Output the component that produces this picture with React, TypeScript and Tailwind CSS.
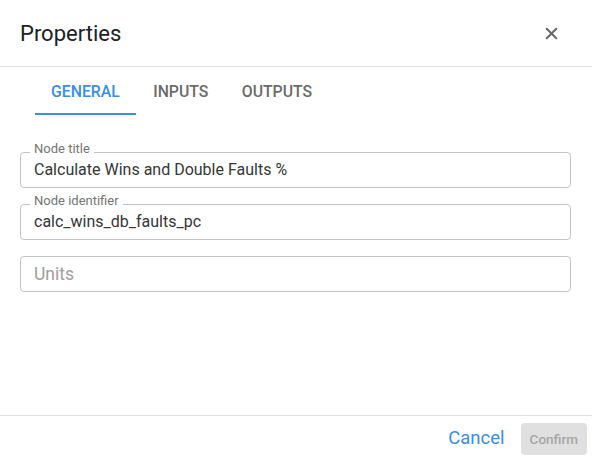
import { X } from 'lucide-react'

interface Field {
  label?: string
  value: string
  placeholder?: boolean
}

const TABS = ['General', 'Inputs', 'Outputs']

const FIELDS: Field[] = [
  { label: 'Node title', value: 'Calculate Wins and Double Faults %' },
  { label: 'Node identifier', value: 'calc_wins_db_faults_pc' },
  { value: 'Units', placeholder: true },
]

function OutlinedField({ field }: { field: Field }) {
  return (
    <div className="relative h-[36px] rounded-[4px] border border-[#c4c4c4] flex items-center px-[13px]">
      {field.label && (
        <span className="absolute left-[9px] -top-[11px] bg-white px-[4px] text-[13px] leading-[14px] text-[#757575]">
          {field.label}
        </span>
      )}
      <span className={field.placeholder ? 'text-[17.5px] text-[#9e9e9e]' : 'text-[16px] text-[#363636]'}>
        {field.value}
      </span>
    </div>
  )
}

export default function App() {
  return (
    <div
      className="w-[592px] h-[462px] bg-white flex flex-col overflow-hidden"
      style={{ fontFamily: 'Roboto, "Liberation Sans", sans-serif' }}
    >
      {/* Header */}
      <div className="h-[67px] shrink-0 flex items-center justify-between pl-5 pr-[31px] border-b border-[#e0e0e0]">
        <h2 className="text-[22px] text-[#212121]">Properties</h2>
        <X size={19} strokeWidth={2.5} className="text-[#666666]" />
      </div>

      {/* Tabs */}
      <div className="h-[49px] shrink-0 flex pl-[35px]">
        {TABS.map((tab, i) => (
          <div
            key={tab}
            className={`relative min-w-[90px] px-4 flex items-center justify-center text-[15.8px] font-medium uppercase ${
              i === 0 ? 'text-[#3a8ee4]' : 'text-[#6b6b6b]'
            }`}
          >
            {tab}
            {i === 0 && <div className="absolute left-0 right-0 bottom-[1px] h-[2px] bg-[#3a8ee4]" />}
          </div>
        ))}
      </div>

      {/* Fields */}
      <div className="flex-1 flex flex-col gap-[16px] pt-[36px] pl-5 pr-[21px]">
        {FIELDS.map(f => (
          <OutlinedField key={f.value} field={f} />
        ))}
      </div>

      {/* Footer */}
      <div className="h-[47px] shrink-0 border-t border-[#e0e0e0] flex items-center justify-end gap-[16px] pr-[5px]">
        <button className="text-[18.5px] text-[#3a8ee4]">Cancel</button>
        <button className="h-[32px] px-[9px] rounded-[4px] bg-[#e0e0e0] text-[13.5px] font-medium text-[#a6a6a6]">
          Confirm
        </button>
      </div>
    </div>
  )
}
